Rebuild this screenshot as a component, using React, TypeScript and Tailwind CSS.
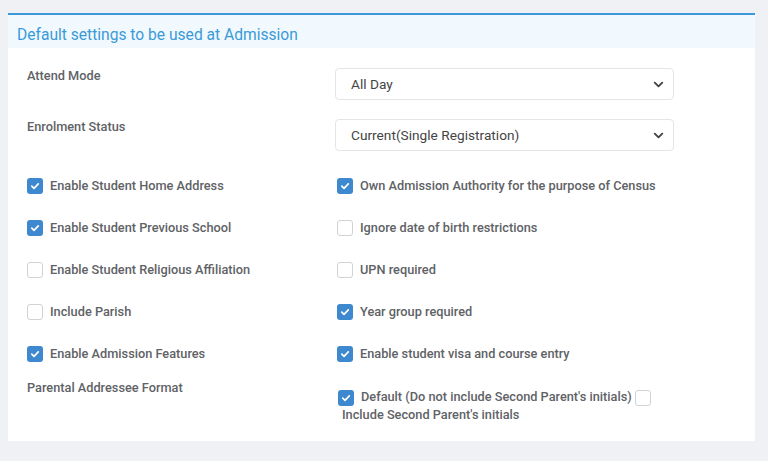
import { ChevronDown } from "lucide-react";

type Opt = { label: string; checked: boolean };

const left: Opt[] = [
  { label: "Enable Student Home Address", checked: true },
  { label: "Enable Student Previous School", checked: true },
  { label: "Enable Student Religious Affiliation", checked: false },
  { label: "Include Parish", checked: false },
  { label: "Enable Admission Features", checked: true },
];

const right: Opt[] = [
  { label: "Own Admission Authority for the purpose of Census", checked: true },
  { label: "Ignore date of birth restrictions", checked: false },
  { label: "UPN required", checked: false },
  { label: "Year group required", checked: true },
  { label: "Enable student visa and course entry", checked: true },
];

function Box({ checked }: { checked: boolean }) {
  if (checked) {
    return (
      <span className="inline-flex w-4 h-4 shrink-0 items-center justify-center rounded-[3px] bg-[#3d88cf] align-middle">
        <svg width="10" height="10" viewBox="0 0 10 10" fill="none">
          <path d="M1.8 5.2 4 7.3 8.3 2.8" stroke="white" strokeWidth="1.7" strokeLinecap="round" strokeLinejoin="round" />
        </svg>
      </span>
    );
  }
  return <span className="inline-block w-4 h-4 shrink-0 rounded-[3px] border border-[#cfd2d6] bg-white align-middle" />;
}

function Check({ opt }: { opt: Opt }) {
  return (
    <div className="flex items-center h-[42px] gap-[7px]">
      <Box checked={opt.checked} />
      <span>{opt.label}</span>
    </div>
  );
}

function Select({ value }: { value: string }) {
  return (
    <div className="w-[339px] h-8 flex items-center justify-between rounded-[4px] border border-[#e3e5e8] bg-white pl-[15px] pr-[7px] text-[13.7px] font-normal text-[#444]">
      <span>{value}</span>
      <ChevronDown size={15} strokeWidth={3} className="text-[#444]" />
    </div>
  );
}

export default function App() {
  return (
    <div className="w-[768px] h-[461px] bg-[#f0f1f5] pt-[13px] pl-2" style={{ fontFamily: "Roboto, 'Liberation Sans', sans-serif" }}>
      <div className="w-[747px] border-t-2 border-t-[#3a9ad9] bg-white">
        <div className="h-[33px] bg-[#f1f9fe] pl-[9px] pt-[8px] flex items-center text-[15.6px] text-[#3a9ad9]">
          Default settings to be used at Admission
        </div>
        <div className="pl-[19px] pt-5 h-[393px] text-[12.75px] font-medium text-[#606266]">
          <div className="flex items-start">
            <div className="w-[308px] pt-[1px] leading-[14px]">Attend Mode</div>
            <Select value="All Day" />
          </div>
          <div className="flex items-start mt-[19px]">
            <div className="w-[308px] pt-[1px] leading-[14px]">Enrolment Status</div>
            <Select value="Current(Single Registration)" />
          </div>
          <div className="grid grid-cols-[310px_1fr] mt-[14px]">
            <div>
              {left.map((o) => (
                <Check key={o.label} opt={o} />
              ))}
            </div>
            <div>
              {right.map((o) => (
                <Check key={o.label} opt={o} />
              ))}
            </div>
            <div className="pt-[3px]">Parental Addressee Format</div>
            <div className="pt-[13px] w-[337px] leading-[17px] pl-[1px]">
              <Box checked={true} />
              <span className="ml-[7px]">Default (Do not include Second Parent&apos;s initials)</span>{" "}
              <Box checked={false} />
              <span className="ml-[4px]">Include Second Parent&apos;s initials</span>
            </div>
          </div>
        </div>
      </div>
    </div>
  );
}
